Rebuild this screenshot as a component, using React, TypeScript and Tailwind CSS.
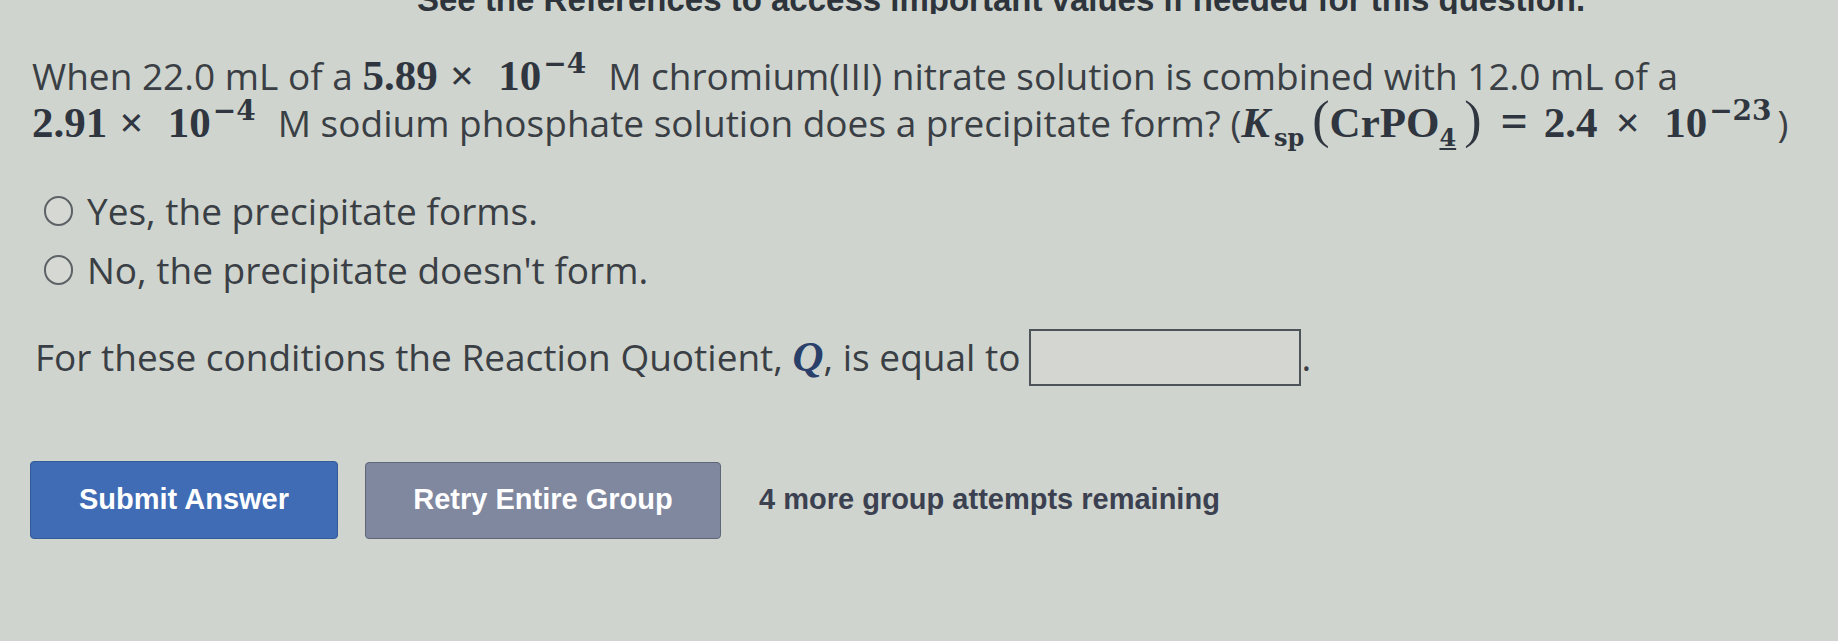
import React from 'react'

const sans = { fontFamily: '"Open Sans", "Liberation Sans", sans-serif' }
const arial = { fontFamily: '"Liberation Sans", Arial, sans-serif' }
const serif = { fontFamily: '"Liberation Serif", "DejaVu Serif", serif' }
const wideSerif = { fontFamily: '"DejaVu Serif", "Liberation Serif", serif' }

// bold MathJax-ish number like 5.89 × 10^-4
function Sci({ mant, exp }: { mant: string, exp: string }) {
    return (
        <span className="text-[43px] leading-[0px] font-bold text-[#2f3640]" style={serif}>
            {mant}
            <span className="ml-[12px] mr-[24px]">×</span>
            10
            <span className="relative -top-[17px] ml-[2px] mr-[22px] text-[28px]" style={wideSerif}>{exp}</span>
        </span>
    )
}

function Radio({ label }: { label: string }) {
    return (
        <label className="flex h-[59px] items-center">
            <span className="ml-[12px] mr-[14px] inline-block h-[30px] w-[29px] shrink-0 rounded-full border-2 border-[#5d6267] bg-[#d5d8d3]" />
            <span className="text-[37px] leading-[59px]">{label}</span>
        </label>
    )
}

export default function App() {
    return (
        <div className="min-h-screen w-full overflow-hidden bg-[#d0d4ce] text-[#3a3f45]" style={sans}>
            {/* cut off reference line at the very top */}
            <div className="h-[14px] overflow-hidden pl-[417px]">
                <div className="-mt-[17px] whitespace-nowrap text-[33px] font-bold leading-none text-[#2e343b]" style={arial}>
                    See the References to access important values if needed for this question.
                </div>
            </div>

            <div className="mt-[38px] pl-[32px]">
                <div className="text-[37px] leading-[47px]">
                    <div className="h-[47px] whitespace-nowrap">
                        When 22.0 mL of a <Sci mant="5.89" exp="−4" />M chromium(III) nitrate solution is combined with 12.0 mL of a
                    </div>
                    <div className="h-[47px] whitespace-nowrap">
                        <Sci mant="2.91" exp="−4" />M sodium phosphate solution does a precipitate form? (
                        <span className="font-bold leading-[0px] text-[#2f3640]" style={serif}>
                            <span className="text-[43px] italic">K</span>
                            <span className="relative top-[9px] ml-[4px] text-[24px]" style={wideSerif}>sp</span>
                            <span className="ml-[8px] text-[52px] font-normal">(</span>
                            <span className="text-[43px]">CrPO</span>
                            <span className="relative top-[9px] text-[24px] underline" style={wideSerif}>4</span>
                            <span className="ml-[8px] text-[52px] font-normal">)</span>
                            <span className="ml-[19px] mr-[16px] text-[48px]">=</span>
                            <span className="text-[43px]">2.4</span>
                            <span className="ml-[18px] mr-[24px] text-[43px]">×</span>
                            <span className="text-[43px]">10</span>
                            <span className="relative -top-[17px] ml-[2px] text-[28px]" style={wideSerif}>−23</span>
                        </span>
                        <span className="ml-[6px]">)</span>
                    </div>
                </div>

                <div className="mt-[35px]">
                    <Radio label="Yes, the precipitate forms." />
                    <Radio label="No, the precipitate doesn't form." />
                </div>

                <div className="mt-[28px] flex h-[60px] items-center pl-[3px]">
                    <span className="whitespace-nowrap text-[37px] leading-[60px]">
                        For these conditions the Reaction Quotient,{' '}
                        <span className="text-[43px] leading-[0px] font-bold italic text-[#28406a]" style={serif}>Q</span>, is equal to
                    </span>
                    <input
                        type="text"
                        aria-label="Q"
                        className="ml-[9px] h-[57px] w-[272px] shrink-0 border-2 border-[#4c545a] bg-[#d3d6d1] outline-none"
                    />
                    <span className="text-[37px] leading-[60px]">.</span>
                </div>
            </div>

            <div className="mt-[74px] flex items-center pl-[30px]" style={arial}>
                <button className="h-[78px] w-[308px] rounded-[4px] border border-[#335a99] bg-[#3f6cb4] text-[29px] font-bold text-white">
                    Submit Answer
                </button>
                <button className="ml-[27px] h-[77px] w-[356px] rounded-[4px] border border-[#5f6679] bg-[#7f889f] text-[29px] font-bold text-white">
                    Retry Entire Group
                </button>
                <span className="ml-[38px] text-[29px] font-bold text-[#3b4150]">
                    4 more group attempts remaining
                </span>
            </div>
        </div>
    )
}
